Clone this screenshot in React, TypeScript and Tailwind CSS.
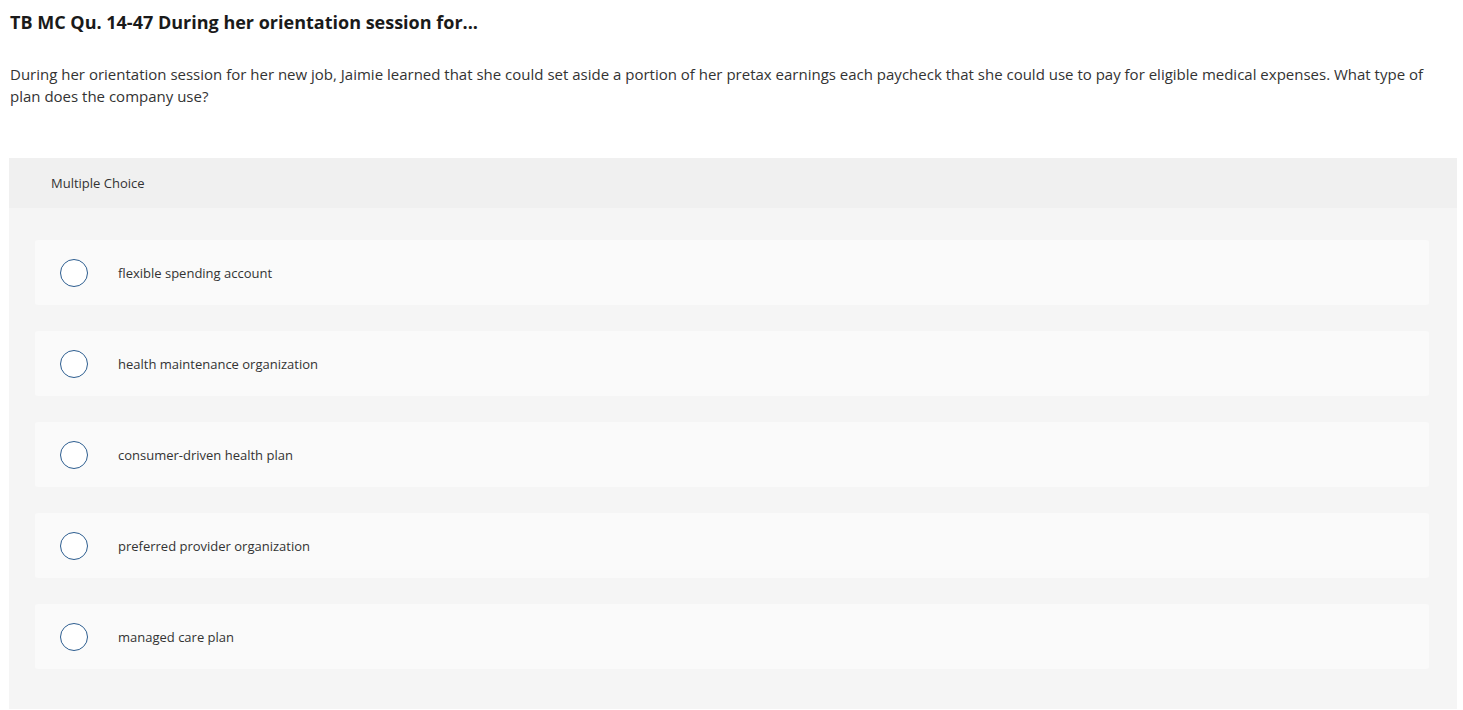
const options = [
  "flexible spending account",
  "health maintenance organization",
  "consumer-driven health plan",
  "preferred provider organization",
  "managed care plan",
];

const App = () => {
  return (
    <div className="min-h-screen bg-white pl-[9px] pr-[6px] text-[#222]" style={{ fontFamily: "'Open Sans', sans-serif" }}>
      <h1 className="pl-px pt-[11px] text-[18px] font-bold leading-[22px] text-[#1a1a1a]">
        TB MC Qu. 14-47 During her orientation session for...
      </h1>
      <p className="mt-[30px] pl-px text-[15px] leading-[22px] text-[#333]">
        During her orientation session for her new job, Jaimie learned that she could set aside a portion of her pretax earnings each paycheck that she could use to pay for eligible medical expenses. What type of plan does the company use?
      </p>
      <div className="mt-[51px] rounded-t-[3px] bg-[#f5f5f5] pb-[40px]">
        <div className="flex h-[50px] items-center bg-[#f0f0f0] pl-[42px] pt-[2px] text-[13px] text-[#333]">
          Multiple Choice
        </div>
        <div className="flex flex-col gap-[26px] px-[26px] pt-[32px] pr-[28px]">
          {options.map((option, index) => (
            <div
              key={index}
              className="flex h-[65px] items-center rounded-[3px] bg-[#fafafa] pl-[25px]"
            >
              <span className="h-[28px] w-[28px] shrink-0 rounded-full border-[1.5px] border-[#2c5d8f] bg-white" />
              <span className="ml-[30px] pt-[2px] text-[13px] text-[#333]">{option}</span>
            </div>
          ))}
        </div>
      </div>
    </div>
  );
};

export default App;
